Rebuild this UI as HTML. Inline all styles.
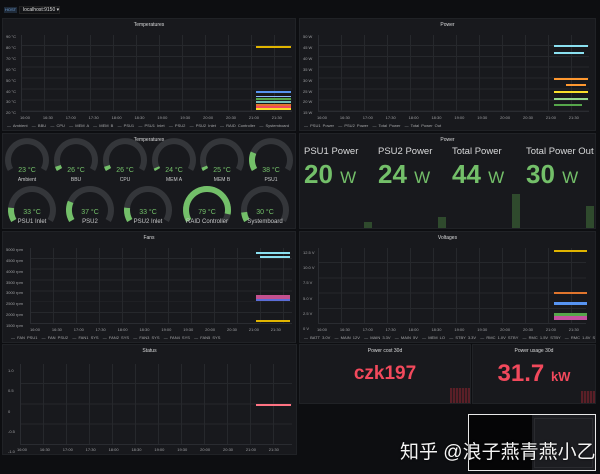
<!DOCTYPE html>
<html><head><meta charset="utf-8"><style>
*{margin:0;padding:0;box-sizing:border-box}
body{width:600px;height:474px;background:#0d0e11;font-family:"Liberation Sans",sans-serif;color:#c8c9ca;position:relative;overflow:hidden}
.p{position:absolute;background:#18191d;border:1px solid #202226;overflow:hidden}
.t{position:absolute;left:0;right:0;top:3px;text-align:center;font-size:5px;color:#d8d9da}
.plot{position:absolute;border-left:1px solid #2a2c31;border-bottom:1px solid #2a2c31;
background-image:repeating-linear-gradient(90deg,transparent 0 22px,#26282c 22px 23px),repeating-linear-gradient(180deg,transparent 0 calc(var(--gy) - 1px),#26282c calc(var(--gy) - 1px) var(--gy))}
.yl{position:absolute;font-size:4px;color:#9fa0a3;white-space:nowrap}
.xl{position:absolute;font-size:4px;color:#9fa0a3;display:flex;gap:0;white-space:nowrap}
.xl span{width:22.9px;text-align:left}
.lg{position:absolute;font-size:4px;color:#a8a9ab;white-space:nowrap;word-spacing:1px}
.ln{position:absolute;height:2px}
.s{position:absolute;font-size:9.5px;color:#d8d9da;white-space:nowrap}
.v{position:absolute;font-size:26px;color:#73bf69;font-weight:bold;white-space:nowrap}
.v small{font-size:17px;font-weight:normal}
</style></head><body>
<div style="position:absolute;left:4px;top:7px;width:13px;height:6px;background:#1f2a38;font-size:4px;color:#6e9fd6;text-align:center;line-height:6px">HOST</div>
<div style="position:absolute;left:19px;top:6px;width:41px;height:8px;background:#121316;border:1px solid #222;font-size:5px;color:#ddd;line-height:7px;padding-left:3px;white-space:nowrap">localhost:9150 ▾</div>

<!-- Temperatures graph -->
<div class="p" style="left:2px;top:18px;width:294px;height:113px">
<div class="t">Temperatures</div>
<div class="plot" style="left:18px;top:16px;width:271px;height:77px;--gy:10.9px"></div>
<div class="yl" style="left:3px;top:13px;line-height:10.9px">90 °C<br>80 °C<br>70 °C<br>60 °C<br>50 °C<br>40 °C<br>30 °C<br>20 °C</div>
<div class="xl" style="left:17px;top:96px"><span>16:00</span><span>16:30</span><span>17:00</span><span>17:30</span><span>18:00</span><span>18:30</span><span>19:00</span><span>19:30</span><span>20:00</span><span>20:30</span><span>21:00</span><span>21:30</span></div>
<div class="lg" style="left:4px;top:104px">— Ambient &nbsp;— BBU &nbsp;— CPU &nbsp;— MEM A &nbsp;— MEM B &nbsp;— PSU1 &nbsp;— PSU1 Inlet &nbsp;— PSU2 &nbsp;— PSU2 Inlet &nbsp;— RAID Controller &nbsp;— Systemboard</div>
<div class="ln" style="left:253px;top:27px;width:35px;background:#e0b400"></div>
<div class="ln" style="left:253px;top:72px;width:35px;background:#5794f2"></div>
<div class="ln" style="left:253px;top:77px;width:35px;background:#8ab8ff;height:1px"></div>
<div class="ln" style="left:253px;top:79px;width:35px;background:#56a64b"></div>
<div class="ln" style="left:253px;top:82px;width:35px;background:#73bfb8"></div>
<div class="ln" style="left:253px;top:85px;width:35px;background:#e0752d"></div>
<div class="ln" style="left:253px;top:87px;width:35px;background:#f2495c"></div>
<div class="ln" style="left:253px;top:89px;width:35px;background:#fade2a"></div>
</div>

<!-- Power graph -->
<div class="p" style="left:299px;top:18px;width:297px;height:113px">
<div class="t">Power</div>
<div class="plot" style="left:18px;top:16px;width:271px;height:77px;--gy:10.9px"></div>
<div class="yl" style="left:3px;top:13px;line-height:10.9px">50 W<br>45 W<br>40 W<br>35 W<br>30 W<br>25 W<br>20 W<br>15 W</div>
<div class="xl" style="left:17px;top:96px"><span>16:00</span><span>16:30</span><span>17:00</span><span>17:30</span><span>18:00</span><span>18:30</span><span>19:00</span><span>19:30</span><span>20:00</span><span>20:30</span><span>21:00</span><span>21:30</span></div>
<div class="lg" style="left:4px;top:104px">— PSU1 Power &nbsp;— PSU2 Power &nbsp;— Total Power &nbsp;— Total Power Out</div>
<div class="ln" style="left:254px;top:26px;width:34px;background:#8ae0f0"></div>
<div class="ln" style="left:254px;top:33px;width:30px;background:#8ae0f0"></div>
<div class="ln" style="left:254px;top:59px;width:34px;background:#ff9830"></div>
<div class="ln" style="left:266px;top:65px;width:20px;background:#ff9830"></div>
<div class="ln" style="left:254px;top:72px;width:34px;background:#fade2a"></div>
<div class="ln" style="left:254px;top:79px;width:34px;background:#96d98d"></div>
<div class="ln" style="left:254px;top:85px;width:28px;background:#56a64b"></div>
</div>

<!-- Gauges -->
<div class="p" style="left:2px;top:133px;width:294px;height:96px">
<div class="t">Temperatures</div>
</div>
<svg style="position:absolute;left:0;top:0" width="300" height="240" font-family="Liberation Sans">
<g fill="none" stroke-width="6">
<g transform="translate(27,160)"><path d="M-16.5 9.5A19 19 0 1 1 16.5 9.5" stroke="#34363a"/></g>
<g transform="translate(76,160)"><path d="M-16.5 9.5A19 19 0 1 1 16.5 9.5" stroke="#34363a"/><path d="M-16.5 9.5A19 19 0 1 1 16.5 9.5" pathLength="100" stroke-dasharray="5 100" stroke="#73bf69"/></g>
<g transform="translate(125,160)"><path d="M-16.5 9.5A19 19 0 1 1 16.5 9.5" stroke="#34363a"/><path d="M-16.5 9.5A19 19 0 1 1 16.5 9.5" pathLength="100" stroke-dasharray="5 100" stroke="#73bf69"/></g>
<g transform="translate(174,160)"><path d="M-16.5 9.5A19 19 0 1 1 16.5 9.5" stroke="#34363a"/><path d="M-16.5 9.5A19 19 0 1 1 16.5 9.5" pathLength="100" stroke-dasharray="3 100" stroke="#73bf69"/></g>
<g transform="translate(222,160)"><path d="M-16.5 9.5A19 19 0 1 1 16.5 9.5" stroke="#34363a"/><path d="M-16.5 9.5A19 19 0 1 1 16.5 9.5" pathLength="100" stroke-dasharray="4 100" stroke="#73bf69"/></g>
<g transform="translate(271,160)"><path d="M-16.5 9.5A19 19 0 1 1 16.5 9.5" stroke="#34363a"/><path d="M-16.5 9.5A19 19 0 1 1 16.5 9.5" pathLength="100" stroke-dasharray="22 100" stroke="#73bf69"/></g>
<g transform="translate(32,210)"><path d="M-18.2 10.5A21 21 0 1 1 18.2 10.5" stroke="#34363a"/><path d="M-18.2 10.5A21 21 0 1 1 18.2 10.5" pathLength="100" stroke-dasharray="15 100" stroke="#73bf69"/></g>
<g transform="translate(90,210)"><path d="M-18.2 10.5A21 21 0 1 1 18.2 10.5" stroke="#34363a"/><path d="M-18.2 10.5A21 21 0 1 1 18.2 10.5" pathLength="100" stroke-dasharray="22 100" stroke="#73bf69"/></g>
<g transform="translate(148,210)"><path d="M-18.2 10.5A21 21 0 1 1 18.2 10.5" stroke="#34363a"/><path d="M-18.2 10.5A21 21 0 1 1 18.2 10.5" pathLength="100" stroke-dasharray="15 100" stroke="#73bf69"/></g>
<g transform="translate(207,210)"><path d="M-18.2 10.5A21 21 0 1 1 18.2 10.5" stroke="#34363a"/><path d="M-18.2 10.5A21 21 0 1 1 18.2 10.5" pathLength="100" stroke-dasharray="92 100" stroke="#73bf69"/></g>
<g transform="translate(265,210)"><path d="M-18.2 10.5A21 21 0 1 1 18.2 10.5" stroke="#34363a"/><path d="M-18.2 10.5A21 21 0 1 1 18.2 10.5" pathLength="100" stroke-dasharray="10 100" stroke="#73bf69"/></g>
</g>
<g fill="#73bf69" font-size="7" text-anchor="middle">
<text x="27" y="172">23 °C</text><text x="76" y="172">26 °C</text><text x="125" y="172">26 °C</text><text x="174" y="172">24 °C</text><text x="222" y="172">25 °C</text><text x="271" y="172">38 °C</text>
<text x="32" y="214">33 °C</text><text x="90" y="214">37 °C</text><text x="148" y="214">33 °C</text><text x="207" y="214">79 °C</text><text x="265" y="214">30 °C</text>
</g>
<g fill="#c8c9ca" font-size="5" text-anchor="middle">
<text x="27" y="181">Ambient</text><text x="76" y="181">BBU</text><text x="125" y="181">CPU</text><text x="174" y="181">MEM A</text><text x="222" y="181">MEM B</text><text x="271" y="181">PSU1</text>
</g>
<g fill="#c8c9ca" font-size="6" text-anchor="middle">
<text x="32" y="223">PSU1 Inlet</text><text x="90" y="223">PSU2</text><text x="148" y="223">PSU2 Inlet</text><text x="207" y="223">RAID Controller</text><text x="265" y="223">Systemboard</text>
</g>
</svg>

<!-- Power stats -->
<div class="p" style="left:299px;top:133px;width:297px;height:96px">
<div class="t">Power</div>
<div class="s" style="left:4px;top:12px">PSU1 Power</div>
<div class="s" style="left:78px;top:12px">PSU2 Power</div>
<div class="s" style="left:152px;top:12px">Total Power</div>
<div class="s" style="left:226px;top:12px">Total Power Out</div>
<div class="v" style="left:4px;top:25px">20 <small>W</small></div>
<div class="v" style="left:78px;top:25px">24 <small>W</small></div>
<div class="v" style="left:152px;top:25px">44 <small>W</small></div>
<div class="v" style="left:226px;top:25px">30 <small>W</small></div>
<div style="position:absolute;left:64px;top:88px;width:8px;height:7px;background:#2f4a2d"></div>
<div style="position:absolute;left:138px;top:83px;width:8px;height:12px;background:#2f4a2d"></div>
<div style="position:absolute;left:212px;top:60px;width:8px;height:35px;background:#2f4a2d"></div>
<div style="position:absolute;left:286px;top:72px;width:8px;height:23px;background:#2f4a2d"></div>
</div>

<!-- Fans -->
<div class="p" style="left:2px;top:231px;width:294px;height:112px">
<div class="t">Fans</div>
<div class="plot" style="left:27px;top:16px;width:262px;height:76px;--gy:10.85px"></div>
<div class="yl" style="left:3px;top:13px;line-height:10.85px">5000 rpm<br>4500 rpm<br>4000 rpm<br>3500 rpm<br>3000 rpm<br>2500 rpm<br>2000 rpm<br>1500 rpm</div>
<div class="xl" style="left:27px;top:95px"><span style="width:21.9px">16:00</span><span style="width:21.9px">16:30</span><span style="width:21.9px">17:00</span><span style="width:21.9px">17:30</span><span style="width:21.9px">18:00</span><span style="width:21.9px">18:30</span><span style="width:21.9px">19:00</span><span style="width:21.9px">19:30</span><span style="width:21.9px">20:00</span><span style="width:21.9px">20:30</span><span style="width:21.9px">21:00</span><span>21:30</span></div>
<div class="lg" style="left:8px;top:103px">— FAN PSU1 &nbsp;— FAN PSU2 &nbsp;— FAN1 SYS &nbsp;— FAN2 SYS &nbsp;— FAN3 SYS &nbsp;— FAN4 SYS &nbsp;— FAN5 SYS</div>
<div class="ln" style="left:253px;top:20px;width:34px;background:#8ae0f0"></div>
<div class="ln" style="left:257px;top:24px;width:30px;background:#8ae0f0"></div>
<div class="ln" style="left:253px;top:63px;width:34px;height:6px;background:#c4508f"></div>
<div class="ln" style="left:253px;top:67px;width:34px;height:2px;background:#5b6dd6"></div>
<div class="ln" style="left:253px;top:88px;width:34px;background:#e0b400"></div>
</div>

<!-- Voltages -->
<div class="p" style="left:299px;top:231px;width:297px;height:112px">
<div class="t">Voltages</div>
<div class="plot" style="left:18px;top:16px;width:268px;height:76px;--gy:15.2px"></div>
<div class="yl" style="left:3px;top:13px;line-height:15.2px">12.5 V<br>10.0 V<br>7.5 V<br>5.0 V<br>2.5 V<br>0 V</div>
<div class="xl" style="left:17px;top:95px"><span>16:00</span><span>16:30</span><span>17:00</span><span>17:30</span><span>18:00</span><span>18:30</span><span>19:00</span><span>19:30</span><span>20:00</span><span>20:30</span><span>21:00</span><span>21:30</span></div>
<div class="lg" style="left:4px;top:103px">— BATT 3.0V &nbsp;— MAIN 12V &nbsp;— MAIN 3.3V &nbsp;— MAIN 5V &nbsp;— MEM LO &nbsp;— STBY 3.3V &nbsp;— RMC 1.0V STBY &nbsp;— RMC 1.5V STBY &nbsp;— RMC 1.8V STBY</div>
<div class="ln" style="left:254px;top:18px;width:33px;background:#e0b400"></div>
<div class="ln" style="left:254px;top:60px;width:33px;background:#e0752d"></div>
<div class="ln" style="left:254px;top:70px;width:33px;height:3px;background:#5794f2"></div>
<div class="ln" style="left:254px;top:81px;width:33px;height:4px;background:#56a64b"></div>
<div class="ln" style="left:254px;top:84px;width:33px;height:4px;background:#c4509f"></div>
</div>

<!-- Status -->
<div class="p" style="left:2px;top:344px;width:295px;height:111px">
<div class="t">Status</div>
<div class="plot" style="left:17px;top:19px;width:272px;height:81px;--gy:20.25px"></div>
<div class="yl" style="left:5px;top:16px;line-height:20.25px">1.0<br>0.5<br>0<br>-0.5<br>-1.0</div>
<div class="xl" style="left:14px;top:102px"><span>16:00</span><span>16:30</span><span>17:00</span><span>17:30</span><span>18:00</span><span>18:30</span><span>19:00</span><span>19:30</span><span>20:00</span><span>20:30</span><span>21:00</span><span>21:30</span></div>
<div class="ln" style="left:253px;top:59px;width:35px;background:#ff7383"></div>
</div>

<!-- Power cost -->
<div class="p" style="left:299px;top:344px;width:172px;height:60px">
<div class="t">Power cost 30d</div>
<div style="position:absolute;left:0;right:0;top:18px;text-align:center;font-size:19px;font-weight:bold;color:#f2495c">czk197</div>
<div style="position:absolute;left:150px;top:43px;width:20px;height:15px;background:repeating-linear-gradient(90deg,#5a1f27 0 2px,#2a1a1e 2px 3px)"></div>
</div>
<div class="p" style="left:472px;top:344px;width:124px;height:60px">
<div class="t">Power usage 30d</div>
<div style="position:absolute;left:0;right:0;top:15px;text-align:center;font-size:24px;font-weight:bold;color:#f2495c;white-space:nowrap">31.7 <span style="font-size:13px">kW</span></div>
<div style="position:absolute;left:108px;top:46px;width:14px;height:12px;background:repeating-linear-gradient(90deg,#5a1f27 0 2px,#2a1a1e 2px 3px)"></div>
</div>

<!-- watermark thumbnail -->
<div style="position:absolute;left:468px;top:414px;width:128px;height:57px;border:1px solid #e8e8e8;background:#1c1d21">
<div style="position:absolute;left:0;top:0;width:63px;height:55px;background:#050506"></div>
<div style="position:absolute;left:65px;top:3px;width:59px;height:50px;border:1px solid #2a2b2f"></div>
</div>
<div style="position:absolute;left:400px;top:437px;font-size:19px;color:#f4f4f4;font-family:'Liberation Sans','Noto Sans CJK SC',sans-serif;white-space:nowrap;text-shadow:0 0 2px #000">知乎 @浪子燕青燕小乙</div>
</body></html>
